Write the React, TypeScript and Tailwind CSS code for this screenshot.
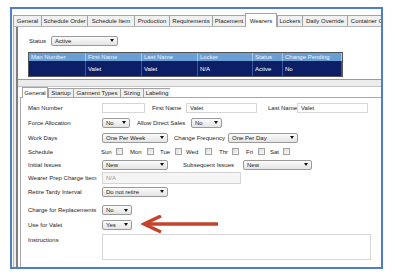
import React from 'react';

const topTabs = [
  { label: 'General', w: 'w-[28px]' },
  { label: 'Schedule Order', w: 'w-[46px]' },
  { label: 'Schedule Item', w: 'w-[47px]' },
  { label: 'Production', w: 'w-[35px]' },
  { label: 'Requirements', w: 'w-[43px]' },
  { label: 'Placement', w: 'w-[33px]' },
  { label: 'Wearers', w: 'w-[32px]', active: true },
  { label: 'Lockers', w: 'w-[25px]' },
  { label: 'Daily Override', w: 'w-[45px]' },
  { label: 'Container Configuration', w: 'w-[70px]' },
];

const lowerTabs = [
  { label: 'General', w: 'w-[26px]', active: true },
  { label: 'Startup', w: 'w-[25px]' },
  { label: 'Garment Types', w: 'w-[47px]' },
  { label: 'Sizing', w: 'w-[23px]' },
  { label: 'Labeling', w: 'w-[27px]' },
];

const gridCols = [
  { head: 'Man Number', val: '', w: 'w-[57px]' },
  { head: 'First Name', val: 'Valet', w: 'w-[56px]' },
  { head: 'Last Name', val: 'Valet', w: 'w-[56px]' },
  { head: 'Locker', val: 'N/A', w: 'w-[55px]' },
  { head: 'Status', val: 'Active', w: 'w-[30px]' },
  { head: 'Change Pending', val: 'No', w: 'w-[59px]' },
];

const days = [
  { d: 'Sun', w: 'w-[15px]', mr: 'mr-[7px]' },
  { d: 'Mon', w: 'w-[17px]', mr: 'mr-[6px]' },
  { d: 'Tue', w: 'w-[15px]', mr: 'mr-[4px]' },
  { d: 'Wed', w: 'w-[19px]', mr: 'mr-[7px]' },
  { d: 'Thr', w: 'w-[13px]', mr: 'mr-[7px]' },
  { d: 'Fri', w: 'w-[12px]', mr: 'mr-[5px]' },
  { d: 'Sat', w: 'w-[13px]', mr: 'mr-0' },
];

const Select = ({ w, value }: { w: string; value: string }) => (
  <div className={`${w} h-[10px] shrink-0 flex items-center justify-between border border-[#9a9a9a] rounded-[2px] bg-linear-to-b from-[#fbfbfb] to-[#e4e4e4] pl-[3px] pr-[3px]`}>
    <span>{value}</span>
    <span className="w-0 h-0 border-l-[2px] border-r-[2px] border-t-[3px] border-l-transparent border-r-transparent border-t-[#111]" />
  </div>
);

const Input = ({ w, value = '' }: { w: string; value?: string }) => (
  <div className={`${w} h-[10px] shrink-0 flex items-center border border-[#d6d6d6] bg-white pl-[3px]`}>
    {value}
  </div>
);

const Check = () => <div className="w-[7px] h-[7px] shrink-0 border border-[#a2a2a2] bg-linear-to-br from-[#dcdcdc] to-[#fafafa]" />;

const Label = ({ text, w = 'w-[74px]' }: { text: string; w?: string }) => (
  <span className={`${w} shrink-0 whitespace-nowrap`}>{text}</span>
);

const App: React.FC = () => {
  return (
    <div className="w-[395px] h-[274px] bg-white pt-[7px] pl-[10px] font-['Liberation_Sans',Arial,sans-serif] text-[6px] leading-none text-[#1c1c1c]">
      <div className="w-[373px] h-[262px] border-2 border-[#4f7fbf] overflow-hidden bg-white flex flex-col">
        {/* top tabs */}
        <div className="mt-[4px] ml-px flex items-end h-[13px] relative z-10 whitespace-nowrap">
          {topTabs.map(t => (
            <div
              key={t.label}
              className={`${t.w} shrink-0 flex items-center justify-center border-t border-l border-[#a3a3a3] overflow-hidden ${t.active ? 'h-[14px] -mb-px bg-white border-r' : 'h-[11px] bg-[#f0f0f0]'}`}
            >
              {t.label}
            </div>
          ))}
        </div>

        <div className="ml-px flex-1 flex border-t border-l border-[#b4b4b4] bg-[#f0f0f0] pl-[2px]">
          <div className="flex-1 flex flex-col border-l-2 border-[#7f7f7f] bg-white">
            {/* status */}
            <div className="mt-[8px] ml-[11px] flex items-center h-[11px]">
              <Label text="Status" w="w-[22px]" />
              <Select w="w-[67px]" value="Active" />
            </div>

            {/* grid */}
            <div className="mt-[6px] ml-[10px] w-[315px] border border-[#555] flex flex-col">
              <div className="flex h-[8px] bg-[#6a9fd6] text-[#eef4fb]">
                {gridCols.map(c => (
                  <div key={c.head} className={`${c.w} shrink-0 flex items-center pl-[2px] border-r border-[#a9c8ea] whitespace-nowrap`}>
                    {c.head}
                  </div>
                ))}
              </div>
              <div className="flex h-[15px] bg-[#0b1e66] text-white">
                {gridCols.map(c => (
                  <div key={c.head} className={`${c.w} shrink-0 flex items-center pl-[2px] border-r border-[#3a55a0]`}>
                    {c.val}
                  </div>
                ))}
              </div>
            </div>

            {/* splitter */}
            <div className="mt-[2px] h-[8px] border-t border-b border-t-[#9a9a9a] border-b-[#c4c4c4] bg-[#ececec]" />

            {/* lower tabs */}
            <div className="ml-[2px] flex-1 flex flex-col">
              <div className="pl-[2px] flex items-end h-[10px] relative z-10 whitespace-nowrap">
                {lowerTabs.map(t => (
                  <div
                    key={t.label}
                    className={`${t.w} shrink-0 flex items-center justify-center border-t border-l border-[#a3a3a3] ${t.active ? 'h-[11px] -mb-px bg-white border-r' : 'h-[9px] bg-[#f0f0f0]'}`}
                  >
                    {t.label}
                  </div>
                ))}
              </div>
              <div className="flex-1 border-t border-l border-[#a8a8a8] pl-[7px] pt-[3px] flex flex-col">
                <div className="h-[14px] flex items-center">
                  <Label text="Man Number" />
                  <Input w="w-[43px]" />
                  <Label text="First Name" w="w-[34px] ml-[7px]" />
                  <Input w="w-[71px]" value="Valet" />
                  <Label text="Last Name" w="w-[29px] ml-[11px]" />
                  <Input w="w-[71px]" value="Valet" />
                </div>
                <div className="h-[15px] flex items-center">
                  <Label text="Force Allocation" />
                  <Select w="w-[28px]" value="No" />
                  <Label text="Allow Direct Sales" w="w-[54px] ml-[7px]" />
                  <Select w="w-[31px]" value="No" />
                </div>
                <div className="h-[15px] flex items-center">
                  <Label text="Work Days" />
                  <Select w="w-[66px]" value="One Per Week" />
                  <Label text="Change Frequency" w="w-[54px] ml-[6px]" />
                  <Select w="w-[70px]" value="One Per Day" />
                </div>
                <div className="h-[13px] flex items-center">
                  <Label text="Schedule" w="w-[73px]" />
                  {days.map(d => (
                    <div key={d.d} className={`flex items-center ${d.mr}`}>
                      <span className={`${d.w} shrink-0`}>{d.d}</span>
                      <Check />
                    </div>
                  ))}
                </div>
                <div className="h-[13px] flex items-center">
                  <Label text="Initial Issues" />
                  <Select w="w-[66px]" value="New" />
                  <Label text="Subsequent Issues" w="w-[60px] ml-[15px]" />
                  <Select w="w-[69px]" value="New" />
                </div>
                <div className="h-[14px] flex items-center">
                  <Label text="Wearer Prep Charge Item" />
                  <div className="w-[139px] h-[12px] flex items-center border border-[#d4d4d4] bg-[#f5f5f5] pl-[3px] text-[#9a9a9a]">N/A</div>
                </div>
                <div className="h-[13px] flex items-center">
                  <Label text="Retire Tardy Interval" />
                  <Select w="w-[66px]" value="Do not retire" />
                </div>
                <div className="mt-[5px] h-[14px] flex items-center">
                  <Label text="Charge for Replacements" />
                  <Select w="w-[30px]" value="No" />
                </div>
                <div className="h-[15px] flex items-center">
                  <Label text="Use for Valet" />
                  <Select w="w-[30px]" value="Yes" />
                  <svg className="ml-[9px] shrink-0" width="78" height="20" viewBox="0 0 78 20">
                    <line x1="5" y1="9" x2="77" y2="9" stroke="#c4432c" strokeWidth="3.5" />
                    <polyline points="20,1 3,9 20,17" fill="none" stroke="#c4432c" strokeWidth="3.5" strokeLinejoin="miter" />
                  </svg>
                </div>
                <div className="mt-[2px] flex items-start">
                  <Label text="Instructions" w="w-[74px] pt-[3px]" />
                  <div className="w-[269px] h-[26px] border border-[#d6d6d6] bg-white" />
                </div>
              </div>
            </div>
          </div>
        </div>
      </div>
    </div>
  );
};

export default App;
